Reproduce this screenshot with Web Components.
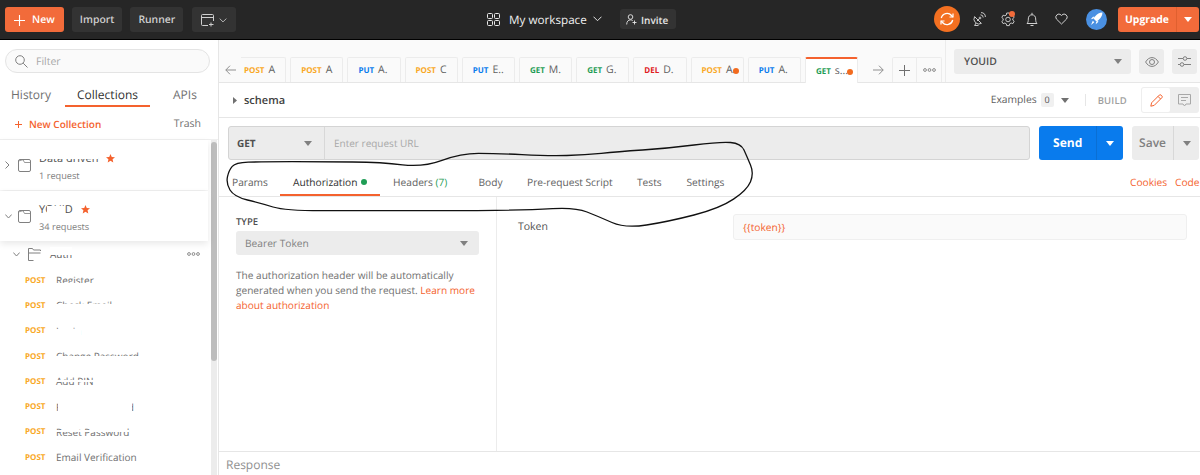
<!DOCTYPE html>
<html lang="en"><head><meta charset="utf-8"><title>Postman</title>
<style>
html,body{margin:0;padding:0;width:1200px;height:475px;overflow:hidden;background:#fff;font-family:"Open Sans","Noto Sans",sans-serif;color:#505050;text-rendering:geometricPrecision}
pm-app{display:block}
</style></head><body>
<pm-app></pm-app>
<script>
const def=(name,css,html,extra={})=>{
  customElements.define(name,class extends HTMLElement{
    connectedCallback(){
      if(this.shadowRoot)return;
      const r=this.attachShadow({mode:'open'});
      const h=typeof html==='function'?html(this):html;
      r.innerHTML=`<style>${css}</style>${h}`;
      if(extra.init)extra.init(r,this);
    }
  });
};
const ORANGE='#f26b3a',LINK='#f4622e';
const caret=(c='#808080',w=8)=>`<svg width="${w}" height="5" viewBox="0 0 8 5"><path d="M0 0h8L4 5z" fill="${c}"/></svg>`;
const chev=(c,w=9,h=5)=>`<svg width="${w}" height="${h+1}" viewBox="0 0 9 6" fill="none" stroke="${c}" stroke-width="1"><path d="M.5.7 4.5 4.7 8.5.7"/></svg>`;

/* ---------- header ---------- */
def('pm-hbtn',`:host{display:inline-flex;align-items:center;justify-content:center;height:25px;padding-top:2px;border-radius:3px;background:#333;color:#cfcfcf;font-size:10.400px;font-weight:600;box-sizing:border-box}
:host([primary]){background:${ORANGE};color:#fff}`,`<slot></slot>`);

def('pm-header',`:host{display:flex;align-items:center;height:40px;box-sizing:border-box;background:#262626;border-bottom:1px solid #000;color:#fff;padding:0 1px 1px 5px}
.l{display:flex;gap:8px;width:231px}
.c{display:flex;align-items:center;margin-left:251px;height:100%}
.ws{font-size:11.700px;font-weight:500;color:#f0f0f0;margin-left:9px;width:84px;white-space:nowrap;padding-top:2px}
.inv{display:flex;align-items:center;height:20px;width:56px;margin-left:18px;background:#333;border-radius:3px;font-size:10px;font-weight:600;color:#e6e6e6;box-sizing:border-box;padding:1px 0 0 6px;gap:4px}
.r{display:flex;align-items:center;margin-left:auto;height:100%}
.sync{width:26px;height:26px;border-radius:50%;background:#f37021;display:flex;align-items:center;justify-content:center;margin-right:12px}
.ic{display:flex;align-items:center;justify-content:center;position:relative}
.dot{position:absolute;width:6px;height:6px;border-radius:50%;background:${ORANGE};right:0;top:-1px}
.rk{width:21px;height:21px;border-radius:50%;background:#4a90e2;display:flex;align-items:center;justify-content:center}
.up{display:flex;align-items:center;height:25px;width:81px;background:${ORANGE};border-radius:3px;margin-left:11px;color:#fff;font-size:10.400px;font-weight:700}
.up span{width:58px;text-align:center;border-right:1px solid #e0602f;line-height:27px;height:25px}
.up i{flex:1;display:flex;justify-content:center}`,
`<div class="l">
  <pm-hbtn primary style="width:59px"><svg width="11" height="11" viewBox="0 0 11 11" style="margin-right:7px" stroke="#fff" stroke-width="1.100"><path d="M5.500 0v11M0 5.500h11"/></svg>New</pm-hbtn>
  <pm-hbtn style="width:51px">Import</pm-hbtn>
  <pm-hbtn style="width:53px">Runner</pm-hbtn>
  <pm-hbtn style="width:44px;margin-left:1px"><svg width="13" height="14" viewBox="0 0 13 14" fill="none" stroke="#cfcfcf" stroke-width="1"><path d="M7 12.500H1.500a1 1 0 0 1-1-1v-9a1 1 0 0 1 1-1h10a1 1 0 0 1 1 1V8M.5 4.500h12M10 9.500v4M8 11.500h4.500"/></svg><span style="width:5px"></span>${chev('#cfcfcf',8,4)}</pm-hbtn>
</div>
<div class="c">
  <svg width="13" height="13" viewBox="0 0 13 13" fill="none" stroke="#e8e8e8" stroke-width="1"><rect x=".5" y=".5" width="5" height="5" rx="1"/><rect x="7.500" y=".5" width="5" height="5" rx="1"/><rect x=".5" y="7.500" width="5" height="5" rx="1"/><rect x="7.500" y="7.500" width="5" height="5" rx="1"/></svg>
  <span class="ws">My workspace</span>${chev('#e0e0e0')}
  <div class="inv"><svg width="11" height="11" viewBox="0 0 11 11" fill="none" stroke="#e6e6e6" stroke-width=".9"><circle cx="4.500" cy="3" r="2.300"/><path d="M.7 10.500c0-3 1.500-4.600 3.800-4.600 1 0 1.600.2 2.200.7M8.500 6.500v4M6.500 8.500h4"/></svg>Invite</div>
</div>
<div class="r">
  <div class="sync"><svg width="14" height="14" viewBox="0 0 14 14" fill="none" stroke="#fff" stroke-width="1.300"><path d="M1.300 6A5.800 5.800 0 0 1 11.500 3.500L12.800 5M12.700 8A5.800 5.800 0 0 1 2.500 10.500L1.200 9"/><path d="M13 1.500V5H9.500M1 12.500V9h3.500" stroke-width="1.200"/></svg></div>
  <div class="ic" style="width:14px;margin-right:14px"><svg width="14" height="14" viewBox="0 0 14 14" fill="none" stroke="#c8c8c8" stroke-width="1"><path d="M2.600 4.600a5 5 0 0 0 6.800 6.800zM5 9 7.500 6.500M2.500 13.500h4M4 11l-1.300 2.500"/><circle cx="8" cy="6" r=".9"/><path d="M8.500 2.800a2.800 2.800 0 0 1 2.700 2.700M9 .6a4.500 4.500 0 0 1 4.400 4.400"/></svg></div>
  <div class="ic" style="width:15px;margin-right:11px"><svg width="14" height="15" viewBox="0 0 14 15" fill="none" stroke="#c8c8c8" stroke-width="1"><path d="M5.700 1h2.600l.4 1.800 1.400.8 1.800-.6 1.300 2.300-1.400 1.200v1.600l1.400 1.200-1.300 2.300-1.800-.6-1.400.8-.4 1.800H5.700l-.4-1.800-1.400-.8-1.800.6L.8 9.500l1.400-1.200V6.700L.8 5.500 2.100 3.200l1.800.6 1.400-.8z"/><circle cx="7" cy="7.500" r="2.300"/></svg><span class="dot"></span></div>
  <div class="ic" style="width:12px;margin-right:17px"><svg width="12" height="15" viewBox="0 0 12 15" fill="none" stroke="#d0d0d0" stroke-width="1"><path d="M1 11.500c1-1 1.300-2 1.300-4.500 0-2.600 1.500-4.200 3.700-4.200S9.700 4.400 9.700 7c0 2.500.3 3.500 1.300 4.500zM6 .8v2M4.500 13.500h3"/></svg></div>
  <div class="ic" style="width:13px;margin-right:18px"><svg width="13" height="12" viewBox="0 0 13 12" fill="none" stroke="#d0d0d0" stroke-width="1"><path d="M6.500 11 1.400 6A3.100 3.100 0 0 1 6 1.900l.5.6.5-.6A3.100 3.100 0 0 1 11.600 6z"/></svg></div>
  <div class="rk"><svg width="13" height="14" viewBox="0 0 13 14"><path d="M12.500.5C9.500.7 7 2 5.200 4.200L3.500 6.500l3 3 2.300-1.700C11 6 12.300 3.500 12.500.5zM3 6.800.8 7.300 3 4.800h1.600zM6.200 10l-.5 2.200 2.500-2.200V8.400zM2.800 8.700 4.300 10.200 1 13z" fill="#fff"/></svg></div>
  <div class="up"><span>Upgrade</span><i>${caret('#fff')}</i></div>
</div>`);

/* ---------- sidebar ---------- */
def('pm-collection',`:host{display:flex;align-items:flex-start;height:50px;box-sizing:border-box;background:#fff;box-shadow:0 3px 7px rgba(0,0,0,.09);width:208px;position:relative;padding-left:5px}
.ch{width:13px;height:100%;display:flex;align-items:center}
.ic{height:100%;display:flex;align-items:center;width:21px}
.tx{padding-top:10px}
.n{position:relative;font-size:11px;line-height:17px;height:17px;color:#505050;display:flex;align-items:center;gap:8px;white-space:nowrap}
.n span{position:relative}
.n b{position:absolute;background:#fff}
.s{font-size:9.200px;line-height:16px;color:#808080;margin-top:1px}`,
t=>`<div class="ch">${t.hasAttribute('open')?`<svg width="7" height="5" viewBox="0 0 7 5" fill="none" stroke="#808080"><path d="M.3.500 3.500 4 6.700.500"/></svg>`:`<svg width="5" height="8" viewBox="0 0 5 8" fill="none" stroke="#808080"><path d="M.5.500 4 4 .5 7.500"/></svg>`}</div>
<div class="ic"><svg width="13" height="13" viewBox="0 0 13 13" fill="none" stroke="#808080" stroke-width="1"><rect x=".5" y=".5" width="12" height="12" rx="1.500"/><path d="M.5 2 5 .7 6.500 3.500H12.500" stroke-width=".8"/></svg></div>
<div class="tx"><div class="n"><span><slot></slot><b style="${t.getAttribute('cover')}"></b></span><svg width="9" height="9" viewBox="0 0 10 10"><path d="m5 0 1.400 3.300 3.600.3-2.700 2.300.8 3.600L5 7.600 1.900 9.500l.8-3.600L0 3.600l3.600-.3z" fill="${LINK}"/></svg></div>
<div class="s">${t.getAttribute('sub')}</div></div>`);

def('pm-folder',`:host{display:flex;align-items:center;height:26.500px;padding-left:13px;width:208px;box-sizing:border-box;position:relative}
.n{font-size:10px;color:#606060;position:relative;margin-left:9px;margin-top:-1px}
.n b{position:absolute;left:0;right:0;top:0;height:8px;background:#fff}
.dots{margin-left:auto;margin-right:8px;display:flex}`,
`<svg width="7" height="5" viewBox="0 0 7 5" fill="none" stroke="#808080"><path d="M.3.500 3.500 4 6.700.500"/></svg>
<svg style="margin-left:8px" width="13" height="13" viewBox="0 0 13 13" fill="none" stroke="#808080"><path d="M12.500 3V2H5.500L4.500.5H.5v12h5M.5 5h12"/></svg>
<span class="n"><slot></slot><b></b></span>
<span class="dots"><svg width="13" height="4" viewBox="0 0 13 4" fill="none" stroke="#808080" stroke-width=".9"><circle cx="2" cy="2" r="1.400"/><circle cx="6.500" cy="2" r="1.400"/><circle cx="11" cy="2" r="1.400"/></svg></span>`);

def('pm-req',`:host{display:flex;align-items:center;height:25.300px;padding-left:25px}
.m{font-size:8px;font-weight:700;color:#f9a825;width:31px}
.n{position:relative;font-size:10px;color:#707070;white-space:nowrap;line-height:16px}
.n b{position:absolute;background:#fff}`,
t=>`<span class="m">POST</span><span class="n"><slot></slot><b style="${t.getAttribute('cover')}"></b></span>`);

def('pm-sidebar',`:host{display:flex;flex-direction:column;width:219px;height:435px;box-sizing:border-box;border-right:1px solid #e6e6e6;background:#fff;overflow:hidden}
.f{display:flex;align-items:center;height:24px;margin:9px 8px 0 5px;border:1px solid #e4e4e4;border-radius:12px;background:#fafafa;box-sizing:border-box;padding-left:9px;padding-top:2px;font-size:10.500px;color:#a8a8a8;gap:8px}
.t{display:flex;height:25px;margin-top:9px;font-size:12px;color:#707070;line-height:25px;position:relative}
.t span{position:absolute;top:0}
.t .a{color:#303030;left:65px;width:85px;text-align:center;height:25px;box-sizing:border-box;border-bottom:2px solid ${LINK}}
.nc{display:flex;align-items:center;height:22px;margin-top:6px;padding:0 17px 0 15px;box-sizing:border-box;font-size:10px;font-weight:600;color:${LINK};gap:7px}
.nc em{margin-left:auto;font-style:normal;font-weight:400;color:#707070;font-size:10.500px}
.body{display:flex;flex:1;margin-top:4px;border-top:1px solid #efefef;min-height:0}
.list{width:211px;flex:none}
.list pm-collection+pm-collection{margin-top:1px}
.sb{width:6px;background:#ececec;padding-top:2px;height:100%;box-sizing:border-box}
.sb i{display:block;height:219px;background:#bdbdbd;border-radius:3px}`,
`<div class="f"><svg width="13" height="13" viewBox="0 0 13 13" fill="none" stroke="#808080" stroke-width="1" style="margin-top:-2px"><circle cx="5" cy="5" r="4.300"/><path d="m8.200 8.200 4.300 4.300"/></svg>Filter</div>
<div class="t"><span style="left:11px">History</span><span class="a">Collections</span><span style="left:173px">APIs</span></div>
<div class="nc"><svg width="7" height="7" viewBox="0 0 7 7" stroke="${LINK}"><path d="M3.500 0v7M0 3.500h7"/></svg>New Collection<em>Trash</em></div>
<div class="body"><div class="list">
<pm-collection sub="1 request" cover="left:0;right:0;top:0;height:9px">Data driven</pm-collection>
<pm-collection open sub="34 requests" cover="left:8px;right:8px;top:5px;height:12px">YOUID</pm-collection>
<pm-folder>Auth</pm-folder>
<pm-req cover="left:0;right:0;bottom:0;height:5px">Register</pm-req>
<pm-req cover="left:0;right:0;bottom:0;height:9px;">Check Email</pm-req>
<pm-req cover="left:0;right:0;bottom:0;height:10px">Login</pm-req>
<pm-req cover="left:0;right:0;bottom:0;height:8px">Change Password</pm-req>
<pm-req cover="left:0;right:0;top:7px;height:2px">Add PIN</pm-req>
<pm-req cover="left:2px;right:2px;top:0;height:16px">Forgot Password</pm-req>
<pm-req cover="left:0;right:0;top:6px;height:2px">Reset Password</pm-req>
<pm-req cover="left:3px;right:3px;top:0;height:4px">Email Verification</pm-req>
</div><div class="sb"><i></i></div></div>`);

/* ---------- tabs ---------- */
const MC={POST:'#f9a825',PUT:'#097bed',GET:'#1f9d55',DEL:'#e0201f'};
def('pm-tab',`:host{display:flex;flex:none;align-items:center;width:53.200px;height:25px;box-sizing:border-box;border:1px solid #ececec;border-bottom:0;border-radius:2px 2px 0 0;padding-left:10px;background:#fafafa;font-size:10.500px;color:#606060;position:relative;white-space:nowrap;overflow:hidden}
:host([active]){background:#fff;border-top:2px solid ${LINK};height:26px;margin-bottom:-1px}
.m{font-size:8px;font-weight:700;margin-right:4px}
.d{position:absolute;right:4px;top:10px;width:6px;height:6px;border-radius:50%;background:#f26b1f}`,
t=>`<span class="m" style="color:${MC[t.getAttribute('method')]}">${t.getAttribute('method')}</span><slot></slot>${t.hasAttribute('dirty')?'<span class="d"></span>':''}`);

def('pm-tabstrip',`:host{display:flex;height:43px;box-sizing:border-box;background:#fafafa;border-bottom:1px solid #e6e6e6}
.tabs{display:flex;align-items:flex-end;width:727px;box-sizing:border-box;padding-left:14px;gap:4px;position:relative;border-right:1px solid #ececec}
.back{position:absolute;left:0;bottom:0;width:22px;height:25px;background:#fafafa;display:flex;align-items:center;padding-left:6px;box-sizing:border-box}
.fw{margin-left:11px;margin-bottom:7px;width:11px;height:10px;display:flex;margin-right:4px;flex:none}
.bx{display:flex;flex:none;width:25px;height:25px;border:1px solid #ececec;border-bottom:0;box-sizing:border-box;align-items:center;justify-content:center;border-radius:2px 0 0 0}
.bx+.bx{border-left:0;border-radius:0 2px 0 0;margin-left:-4px}
.env{flex:1;display:flex;align-items:flex-start;padding:9px 0 0 8px;gap:8px}
.sel{width:177px;height:25px;background:#ececec;border-radius:3px;display:flex;align-items:center;padding:0 9px 0 10px;box-sizing:border-box;font-size:10.400px;font-weight:600;color:#505050;justify-content:space-between}
.ib{width:25px;height:25px;background:#ececec;border-radius:3px;display:flex;align-items:center;justify-content:center}`,
`<div class="tabs">
<pm-tab method="POST">A</pm-tab><pm-tab method="POST">A</pm-tab><pm-tab method="PUT">A.</pm-tab><pm-tab method="POST">C</pm-tab><pm-tab method="PUT">E..</pm-tab><pm-tab method="GET">M.</pm-tab><pm-tab method="GET">G.</pm-tab><pm-tab method="DEL">D.</pm-tab><pm-tab method="POST" dirty>A.</pm-tab><pm-tab method="PUT">A.</pm-tab><pm-tab method="GET" active dirty>s...</pm-tab>
<span class="back"><svg width="11" height="10" viewBox="0 0 11 10" fill="none" stroke="#909090"><path d="M11 5H.8M5 .7.800 5 5 9.300"/></svg></span>
<span class="fw"><svg width="11" height="10" viewBox="0 0 11 10" fill="none" stroke="#909090"><path d="M0 5h10.200M6 .7 10.200 5 6 9.300"/></svg></span>
<span class="bx"><svg width="11" height="11" viewBox="0 0 11 11" stroke="#707070"><path d="M5.500 0v11M0 5.500h11"/></svg></span>
<span class="bx"><svg width="13" height="4" viewBox="0 0 13 4" fill="none" stroke="#808080" stroke-width=".9"><circle cx="2" cy="2" r="1.400"/><circle cx="6.500" cy="2" r="1.400"/><circle cx="11" cy="2" r="1.400"/></svg></span>
</div>
<div class="env"><div class="sel">YOUID${caret()}</div>
<div class="ib"><svg width="14" height="10" viewBox="0 0 14 10" fill="none" stroke="#808080"><path d="M.6 5C2.400 2 4.500.6 7 .6S11.600 2 13.400 5C11.600 8 9.500 9.400 7 9.400S2.400 8 .6 5z"/><circle cx="7" cy="5" r="2.500"/></svg></div>
<div class="ib"><svg width="13" height="11" viewBox="0 0 13 11" fill="none" stroke="#808080"><path d="M0 2.500h5M9 2.500h4M0 8.500h2M6 8.500h7"/><circle cx="7" cy="2.500" r="1.800"/><circle cx="4" cy="8.500" r="1.800"/></svg></div></div>`);

def('pm-titlebar',`:host{display:flex;align-items:center;height:35px;box-sizing:border-box;border-bottom:1px solid #e6e6e6;padding-left:14px;padding-right:1px;background:#fff}
.n{font-size:11px;font-weight:600;color:#404040;margin-left:7px}
.ex{margin-left:auto;font-size:10.300px;color:#606060}
.b0{width:13px;height:14px;background:#f0f0f0;border-radius:2px;font-size:9px;text-align:center;line-height:14px;margin:0 7px 0 4px;color:#505050}
.sep{width:1px;height:12px;background:#e6e6e6;margin:0 12px 0 16px}
.bd{font-size:9.500px;color:#a0a0a0;letter-spacing:.2px;margin-right:14px;font-weight:600}
.tg{display:flex;width:58px;height:26px;background:#eee;border-radius:3px;padding:1px;box-sizing:border-box}
.tg span{width:28px;display:flex;align-items:center;justify-content:center}
.tg span:first-child{background:#fff;border-radius:2px}`,
`<svg width="4" height="7" viewBox="0 0 4 7"><path d="M0 0l4 3.500L0 7z" fill="#707070"/></svg><span class="n"><slot></slot></span>
<span class="ex">Examples</span><span class="b0">0</span>${caret('#707070')}<span class="sep"></span><span class="bd">BUILD</span>
<span class="tg"><span><svg width="13" height="13" viewBox="0 0 13 13" fill="none" stroke="${LINK}" stroke-width="1"><path d="M.8 12.200 1.600 8.800 9.300 1.100a1.200 1.200 0 0 1 1.700 0l.9.900a1.200 1.200 0 0 1 0 1.700L4.200 11.400zM8 2.400l2.600 2.600"/></svg></span><span><svg width="13" height="13" viewBox="0 0 13 13" fill="none" stroke="#a8a8a8"><path d="M.5.500h12v9.500H8l-1.500 2L5 10H.5zM3 3.500h7M3 6.500h5"/></svg></span></span>`);

def('pm-urlbar',`:host{display:flex;align-items:flex-start;padding:8px 1px 0 9px;height:43px;box-sizing:border-box;background:#fff}
.u{display:flex;width:803px;height:34px;box-sizing:border-box;background:#ececec;border:1px solid #d4d4d4;border-radius:3px}
.m{width:96px;display:flex;align-items:center;justify-content:space-between;padding:0 12px 0 8px;box-sizing:border-box;border-right:1px solid #d8d8d8;font-size:10px;font-weight:700;color:#505050}
.i{padding-left:9px;line-height:33px;font-size:10px;color:#a8a8a8}
.s{display:flex;align-items:center;width:84px;height:34px;margin-left:9px;background:#097bed;border-radius:3px;color:#fff;font-size:12px;font-weight:700}
.s span{width:57px;line-height:34px;text-align:center;border-right:1px solid #0a6fd4}
.s i{flex:1;display:flex;justify-content:center}
.v{display:flex;align-items:center;width:67px;height:34px;margin-left:9px;background:#ececec;border-radius:3px;color:#808080;font-size:12px;font-weight:600}
.v span{width:41px;line-height:34px;text-align:center;border-right:1px solid #d8d8d8}
.v i{flex:1;display:flex;justify-content:center}`,
`<div class="u"><div class="m">GET${caret()}</div><div class="i">Enter request URL</div></div>
<div class="s"><span>Send</span><i>${caret('#fff')}</i></div>
<div class="v"><span>Save</span><i>${caret()}</i></div>`);

def('pm-reqtabs',`:host{display:block;position:relative;height:36px;box-sizing:border-box;border-bottom:1px solid #e6e6e6;background:#fff;font-size:10.200px;color:#606060;line-height:45px}
span{position:absolute;top:-1px;white-space:nowrap}
.a{color:#303030;left:61px;width:100px;height:36px;box-sizing:border-box;border-bottom:2px solid ${LINK};padding-left:13px}
.a i{display:inline-block;width:6px;height:6px;background:#1f9d55;border-radius:50%;margin-left:4px;vertical-align:1px}
em{font-style:normal;color:#1f9d55}
.l{color:${LINK}}`,
`<span style="left:13px">Params</span><span class="a">Authorization<i></i></span><span style="left:174px">Headers <em>(7)</em></span><span style="left:259.500px">Body</span><span style="left:308px">Pre-request Script</span><span style="left:418px">Tests</span><span style="left:467.500px">Settings</span><span class="l" style="left:911px">Cookies</span><span class="l" style="left:956px">Code</span>`);

def('pm-auth',`:host{display:grid;grid-template-columns:278px 1fr;height:254px;box-sizing:border-box;background:#fff}
.a{border-right:1px solid #ececec;padding:18px 17px 0 17px}
.t{font-size:9.500px;font-weight:600;color:#505050;line-height:14px}
.s{height:24px;margin-top:2px;width:243px;background:#ececec;border-radius:3px;box-sizing:border-box;padding:0 11px 0 9px;display:flex;align-items:center;justify-content:space-between;font-size:10.200px;color:#808080}
p{margin:13px 0 0;width:243px;font-size:10.100px;line-height:15px;color:#707070}
a{color:${LINK}}
.b{display:flex;align-items:flex-start;padding:17px 13px 0 21px}
.k{width:215px;font-size:10.500px;line-height:26px;color:#505050}
.v{flex:1;height:26px;box-sizing:border-box;background:#fafafa;border:1px solid #efefef;border-radius:3px;padding-left:9px;font-size:10.200px;line-height:24px;color:${LINK}}`,
`<div class="a"><div class="t">TYPE</div><div class="s">Bearer Token${caret()}</div>
<p>The authorization header will be automatically<br>generated when you send the request. <a>Learn more</a><br><a>about authorization</a></p></div>
<div class="b"><div class="k">Token</div><div class="v">{{token}}</div></div>`);

def('pm-response',`:host{display:block;height:24px;box-sizing:border-box;border-top:1px solid #e6e6e6;padding-left:7px;background:#fff;font-size:12px;line-height:26px;color:#909090}`,`<slot></slot>`);

def('pm-scribble',`:host{position:absolute;left:0;top:0;width:1200px;height:475px;pointer-events:none}svg{display:block}`,
`<svg width="1200" height="475" viewBox="0 0 1200 475"><path id="p" fill="none" stroke="#111" stroke-width="1.300"/></svg>`,
{init(r){
 const pts=[[235.5,162.7],[261,161.7],[323,161.7],[382,162.3],[423,167.3],[461,153.3],[496,153.3],[548,156],[585.5,155],[617,151.7],[668,148.3],[720,141.7],[741,143.3],[747,156.7],[754,173.3],[747,190],[720,208.3],[668,221.7],[625,228.3],[599,216.7],[575,207.3],[530,210],[461,210.7],[358,210.7],[285,210.7],[261,203.3],[234,196.7],[226,183.3],[229,170]];
 const mid=(a,b)=>[(a[0]+b[0])/2,(a[1]+b[1])/2];
 let s=mid(pts[pts.length-1],pts[0]),d=`M${s[0]} ${s[1]}`;
 pts.forEach((p,i)=>{const m=mid(p,pts[(i+1)%pts.length]);d+=`Q${p[0]} ${p[1]} ${m[0]} ${m[1]}`});
 r.getElementById('p').setAttribute('d',d);
}});

def('pm-app',`:host{display:block;position:relative;width:1200px;height:475px;overflow:hidden}
.w{display:flex}
.m{flex:1;min-width:0}`,
`<pm-header></pm-header><div class="w"><pm-sidebar></pm-sidebar><div class="m"><pm-tabstrip></pm-tabstrip><pm-titlebar>schema</pm-titlebar><pm-urlbar></pm-urlbar><pm-reqtabs></pm-reqtabs><pm-auth></pm-auth><pm-response>Response</pm-response></div></div><pm-scribble></pm-scribble>`);
</script>
</body></html>
